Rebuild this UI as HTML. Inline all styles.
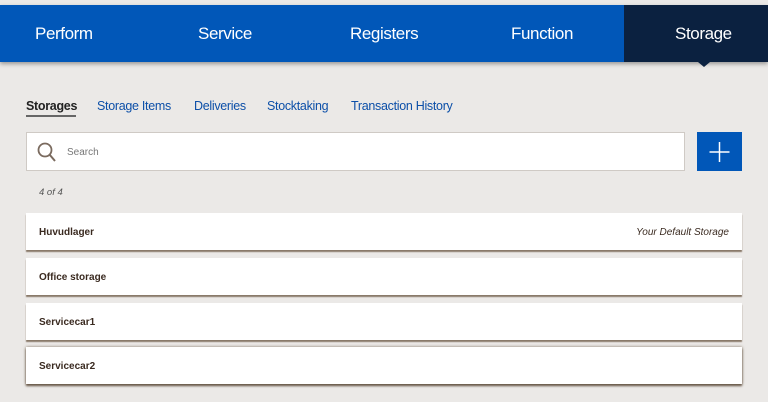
<!DOCTYPE html>
<html><head><style>
body{margin:0;width:768px;height:402px;background:#ebe9e7;font-family:"Liberation Sans",sans-serif;position:relative;overflow:hidden}
.nav{position:absolute;top:5px;left:0;width:768px;height:57px;background:#0157b8;box-shadow:0 2px 4px rgba(0,0,0,.35)}
.nav span{position:absolute;top:19px;color:#fff;font-size:17px;letter-spacing:-.4px}
.st{position:absolute;left:624px;top:0;width:144px;height:57px;background:#0b2140}
.arrow{position:absolute;left:698px;top:62px;width:0;height:0;border-left:6px solid transparent;border-right:6px solid transparent;border-top:5px solid #0b2140}
.tab{position:absolute;top:99px;font-size:12.5px;color:#0c4fa8;letter-spacing:-.3px}
.search{position:absolute;left:26px;top:132px;width:657px;height:37px;background:#fff;border:1px solid #cfcac5}
.plus{position:absolute;left:697px;top:132px;width:45px;height:39px;background:#0157b8}
.row{position:absolute;left:26px;width:716px;height:37px;background:#fff;box-shadow:0 2px 1px #8a7a6a;font-size:10px;font-weight:bold;color:#3a2a20}
.row span{position:absolute;left:13px;top:14px}
</style></head><body>
<div class="nav">
<span style="left:35px">Perform</span><span style="left:198px">Service</span><span style="left:350px">Registers</span><span style="left:511px">Function</span>
<div class="st"><span style="left:51px">Storage</span></div>
</div>
<div class="arrow"></div>
<div class="tab" style="left:26px;color:#222;font-weight:bold">Storages</div>
<div style="position:absolute;left:26px;top:115px;width:50px;height:2px;background:#666"></div>
<div class="tab" style="left:97px">Storage Items</div>
<div class="tab" style="left:194px">Deliveries</div>
<div class="tab" style="left:267px">Stocktaking</div>
<div class="tab" style="left:351px">Transaction History</div>
<div class="search">
<svg style="position:absolute;left:9px;top:8px" width="22" height="22" viewBox="0 0 22 22"><circle cx="9" cy="9" r="6.5" fill="none" stroke="#7a6a5e" stroke-width="1.8"/><line x1="13.5" y1="13.5" x2="19" y2="20" stroke="#7a6a5e" stroke-width="2"/></svg>
<span style="position:absolute;left:40px;top:14px;font-size:10px;color:#777">Search</span>
</div>
<div class="plus"><svg width="45" height="39"><line x1="22.5" y1="10" x2="22.5" y2="30" stroke="#fff" stroke-width="1.5"/><line x1="12.5" y1="20" x2="32.5" y2="20" stroke="#fff" stroke-width="1.5"/></svg></div>
<div style="position:absolute;left:39px;top:187px;font-size:9.5px;font-style:italic;color:#555">4 of 4</div>
<div class="row" style="top:213px"><span>Huvudlager</span><span style="left:auto;right:13px;font-weight:normal;font-style:italic">Your Default Storage</span></div>
<div class="row" style="top:258px"><span>Office storage</span></div>
<div class="row" style="top:303px"><span>Servicecar1</span></div>
<div class="row" style="top:347px;box-shadow:0 2px 2px #6a5a4a,0 0 3px #8a7a6a"><span>Servicecar2</span></div>
</body></html>
